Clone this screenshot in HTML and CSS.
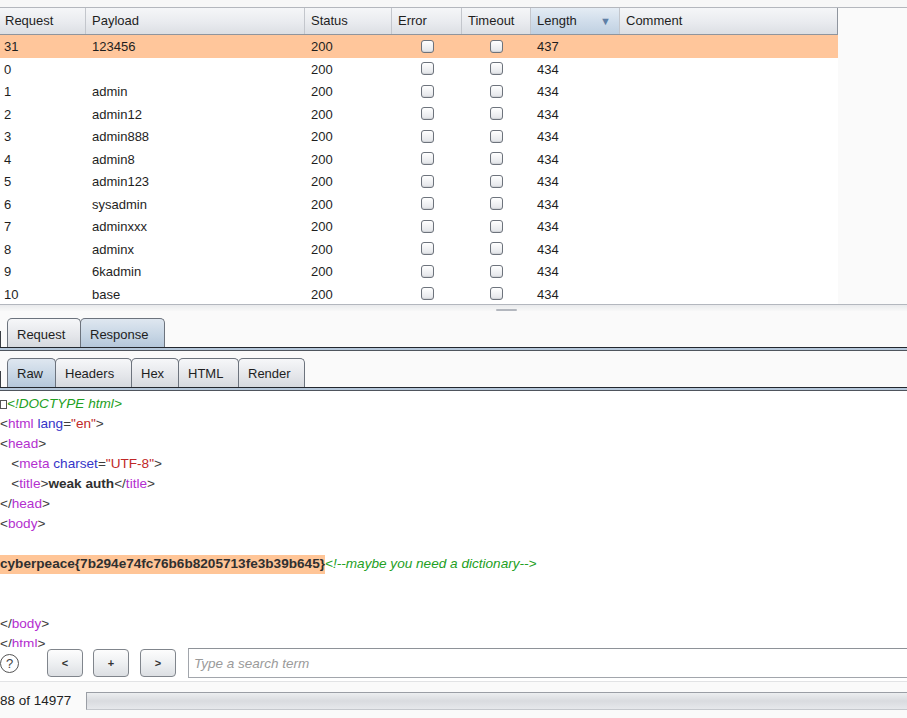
FILE: index.html
```html
<!DOCTYPE html>
<html lang="en">
<head>
<meta charset="UTF-8">
<title>Intruder results</title>
<link rel="stylesheet" href="styles.css">
</head>
<body>
<div class="app">
  <div class="top-strip"></div>
  <div class="results">
    <div class="table">
      <div class="hrow">
        <div class="hcell">Request</div>
        <div class="hcell">Payload</div>
        <div class="hcell">Status</div>
        <div class="hcell">Error</div>
        <div class="hcell">Timeout</div>
        <div class="hcell sorted"><span>Length</span><span class="arrow">&#9660;</span></div>
        <div class="hcell last">Comment</div>
      </div>
      <div class="row sel"><div class="c">31</div><div class="c">123456</div><div class="c">200</div><div class="c cb"><span class="box"></span></div><div class="c cb"><span class="box"></span></div><div class="c">437</div><div class="c"></div></div>
      <div class="row"><div class="c">0</div><div class="c"></div><div class="c">200</div><div class="c cb"><span class="box"></span></div><div class="c cb"><span class="box"></span></div><div class="c">434</div><div class="c"></div></div>
      <div class="row"><div class="c">1</div><div class="c">admin</div><div class="c">200</div><div class="c cb"><span class="box"></span></div><div class="c cb"><span class="box"></span></div><div class="c">434</div><div class="c"></div></div>
      <div class="row"><div class="c">2</div><div class="c">admin12</div><div class="c">200</div><div class="c cb"><span class="box"></span></div><div class="c cb"><span class="box"></span></div><div class="c">434</div><div class="c"></div></div>
      <div class="row"><div class="c">3</div><div class="c">admin888</div><div class="c">200</div><div class="c cb"><span class="box"></span></div><div class="c cb"><span class="box"></span></div><div class="c">434</div><div class="c"></div></div>
      <div class="row"><div class="c">4</div><div class="c">admin8</div><div class="c">200</div><div class="c cb"><span class="box"></span></div><div class="c cb"><span class="box"></span></div><div class="c">434</div><div class="c"></div></div>
      <div class="row"><div class="c">5</div><div class="c">admin123</div><div class="c">200</div><div class="c cb"><span class="box"></span></div><div class="c cb"><span class="box"></span></div><div class="c">434</div><div class="c"></div></div>
      <div class="row"><div class="c">6</div><div class="c">sysadmin</div><div class="c">200</div><div class="c cb"><span class="box"></span></div><div class="c cb"><span class="box"></span></div><div class="c">434</div><div class="c"></div></div>
      <div class="row"><div class="c">7</div><div class="c">adminxxx</div><div class="c">200</div><div class="c cb"><span class="box"></span></div><div class="c cb"><span class="box"></span></div><div class="c">434</div><div class="c"></div></div>
      <div class="row"><div class="c">8</div><div class="c">adminx</div><div class="c">200</div><div class="c cb"><span class="box"></span></div><div class="c cb"><span class="box"></span></div><div class="c">434</div><div class="c"></div></div>
      <div class="row"><div class="c">9</div><div class="c">6kadmin</div><div class="c">200</div><div class="c cb"><span class="box"></span></div><div class="c cb"><span class="box"></span></div><div class="c">434</div><div class="c"></div></div>
      <div class="row"><div class="c">10</div><div class="c">base</div><div class="c">200</div><div class="c cb"><span class="box"></span></div><div class="c cb"><span class="box"></span></div><div class="c">434</div><div class="c"></div></div>
    </div>
    <div class="filler"></div>
  </div>
  <div class="splitter"><span class="grip"></span></div>
  <div class="tabbar outer">
    <span class="edge"></span>
    <div class="tab">Request</div>
    <div class="tab active">Response</div>
  </div>
  <div class="sep"></div>
  <div class="tabbar inner">
    <span class="edge"></span>
    <div class="tab active">Raw</div>
    <div class="tab">Headers</div>
    <div class="tab">Hex</div>
    <div class="tab">HTML</div>
    <div class="tab">Render</div>
  </div>
  <div class="sep"></div>
  <div class="code"><pre><span class="bom"></span><span class="cm">&lt;!DOCTYPE html&gt;</span>
<span class="p">&lt;</span><span class="t">html</span><span class="a"> lang</span><span class="p">=</span><span class="v">"en"</span><span class="p">&gt;</span>
<span class="p">&lt;</span><span class="t">head</span><span class="p">&gt;</span>
   <span class="p">&lt;</span><span class="t">meta</span><span class="a"> charset</span><span class="p">=</span><span class="v">"UTF-8"</span><span class="p">&gt;</span>
   <span class="p">&lt;</span><span class="t">title</span><span class="p">&gt;</span><b class="txt">weak auth</b><span class="p">&lt;/</span><span class="t">title</span><span class="p">&gt;</span>
<span class="p">&lt;/</span><span class="t">head</span><span class="p">&gt;</span>
<span class="p">&lt;</span><span class="t">body</span><span class="p">&gt;</span>

<b class="txt hl">cyberpeace{7b294e74fc76b6b8205713fe3b39b645}</b><span class="cm">&lt;!--maybe you need a dictionary--&gt;</span>


<span class="p">&lt;/</span><span class="t">body</span><span class="p">&gt;</span>
<span class="p">&lt;/</span><span class="t">html</span><span class="p">&gt;</span></pre></div>
  <div class="search">
    <span class="help">?</span>
    <button class="btn first">&lt;</button>
    <button class="btn">+</button>
    <button class="btn">&gt;</button>
    <div class="input">Type a search term</div>
  </div>
  <div class="status">
    <span class="count">88 of 14977</span>
    <div class="progress"></div>
  </div>
</div>
</body>
</html>
```

FILE: styles.css
```css
* { box-sizing: border-box; }
html, body { margin: 0; padding: 0; }
body {
  width: 907px;
  height: 718px;
  overflow: hidden;
  background: #fafafa;
  font-family: "Liberation Sans", Arial, sans-serif;
  font-size: 13px;
  color: #1e1e1e;
}
.app { width: 907px; height: 718px; overflow: hidden; display: flex; flex-direction: column; }

.top-strip { height: 8px; flex: none; background: #f7f7f7; border-bottom: 1px solid #b4b7bd; }

.results { display: flex; height: 297px; flex: none; border-bottom: 1px solid #b3b7be; }
.table { width: 838px; flex: none; background: #fff; }
.filler { flex: 1; background: #fafafa; }

.hrow, .row {
  display: grid;
  grid-template-columns: 86px 219px 87px 70px 69px 89px 218px;
}
.hrow { height: 27px; border-bottom: 1px solid #8f959e; }
.hcell {
  display: flex; align-items: center;
  padding-left: 6px; padding-bottom: 1px;
  background: linear-gradient(#f5f6f8, #e9ebef 55%, #dcdfe4);
  border-right: 1px solid #c3c6cc;
}
.hcell:first-child { padding-left: 5px; }
.hcell.last { border-right: 1px solid #8f959e; }
.hcell.sorted {
  background: linear-gradient(#e4ecf4, #cfdcea 55%, #bfd0e1);
  justify-content: space-between;
  padding-right: 8px;
}
.arrow { color: #5f7fa6; font-size: 11px; }

.row { height: 22.5px; }
.row.sel { background: #ffc69b; }
.c { display: flex; align-items: center; padding-left: 6px; padding-top: 1px; white-space: nowrap; }
.c:first-child { padding-left: 4px; }
.c.cb { justify-content: center; padding-left: 0; padding-top: 0; }
.box {
  width: 13px; height: 13px;
  border: 1px solid #6d737c;
  border-radius: 3px;
  background: linear-gradient(#ffffff, #e3e5e9);
  box-shadow: inset 0 -1px 1px rgba(0,0,0,0.08);
}

.splitter {
  height: 6px; flex: none;
  background: linear-gradient(#e9eaec, #f8f8f8);
  display: flex; justify-content: center;
}
.grip { width: 21px; height: 2px; margin-top: 4px; margin-left: 106px; background: #b3b7be; border-radius: 1px; }

.tabbar { display: flex; align-items: flex-end; flex: none; background: #fafafa; }
.tabbar.outer { height: 36px; }
.tabbar.inner { height: 36px; }
.edge { width: 7px; height: 16px; border-left: 1px solid #3a3e44; flex: none; }
.tab {
  height: 29px;
  display: flex; align-items: center;
  padding: 0 9px 0 9px;
  border: 1px solid #6c737d;
  border-bottom: none;
  border-radius: 5px 5px 0 0;
  background: linear-gradient(#f6f7f9, #e4e6ea 60%, #d6d9de);
  color: #1e1e1e;
  margin-right: -1px;
}
.tab.active { background: linear-gradient(#dfe7f0, #c6d5e4 60%, #b5c7da); }
.outer .tab { padding-top: 2px; }
.outer .tab:nth-child(2) { width: 74px; }
.outer .tab:nth-child(3) { width: 85px; }
.inner .tab:nth-child(2) { width: 49px; }
.inner .tab:nth-child(3) { width: 77px; }
.inner .tab:nth-child(4) { width: 48px; }
.inner .tab:nth-child(5) { width: 61px; }
.inner .tab:nth-child(6) { width: 67px; }

.sep {
  height: 4px; flex: none;
  border-top: 1px solid #23272d;
  border-bottom: 1px solid #4f555d;
  background: #b5c7da;
}

.code { height: 256px; flex: none; background: #fff; overflow: hidden; }
.code pre {
  margin: 0;
  padding-top: 3px;
  font-family: "Liberation Sans", Arial, sans-serif;
  font-size: 13.6px;
  line-height: 20px;
  white-space: pre;
  color: #444;
}
.bom { display: inline-block; width: 7px; height: 9px; border: 1px solid #555; vertical-align: -1px; }
.cm { color: #23a023; font-style: italic; }
.p { color: #3c3c3c; }
.t { color: #b42fcf; }
.a { color: #3535c8; }
.v { color: #c02828; }
.txt { color: #303030; font-weight: bold; }
.hl { background: #ffc597; padding: 1px 0 3px 0; }

.search { height: 35px; flex: none; display: flex; align-items: flex-start; background: #fff; border-bottom: 1px solid #e2e3e5; }
.help {
  width: 19px; height: 19px; margin-top: 7px; flex: none;
  border: 1.5px solid #555; border-radius: 50%;
  display: flex; align-items: center; justify-content: center;
  font-size: 13px; color: #444;
}
.btn {
  width: 36px; height: 28px; margin-top: 2px; margin-left: 10px; flex: none;
  border: 1px solid #80858c; border-radius: 4px;
  background: linear-gradient(#fdfdfd, #eef0f2 50%, #dcdfe3);
  font-family: "Liberation Sans", Arial, sans-serif;
  font-size: 11px; font-weight: bold; color: #333;
  padding: 0;
}
.btn.first { margin-left: 28px; }
.btn:nth-of-type(3) { margin-left: 11px; }
.input {
  width: 730px; height: 30px; margin-top: 1px; margin-left: 12px; flex: none;
  border: 1px solid #a2a6ac; border-top-color: #8e9298;
  background: #fff;
  display: flex; align-items: center; padding-left: 5px;
  font-style: italic; color: #9a9a9a; font-size: 13.5px;
}

.status { flex: 1; display: flex; align-items: flex-start; padding-top: 10px; background: #fafafa; }
.count { width: 86px; flex: none; line-height: 18px; color: #222; font-size: 13.5px; }
.progress {
  width: 830px; height: 18px; flex: none;
  border: 1px solid #9a9ea5; border-bottom-color: #c5c8cd;
  background: linear-gradient(#eceef0, #d9dbdf 50%, #e6e8eb);
}
```
